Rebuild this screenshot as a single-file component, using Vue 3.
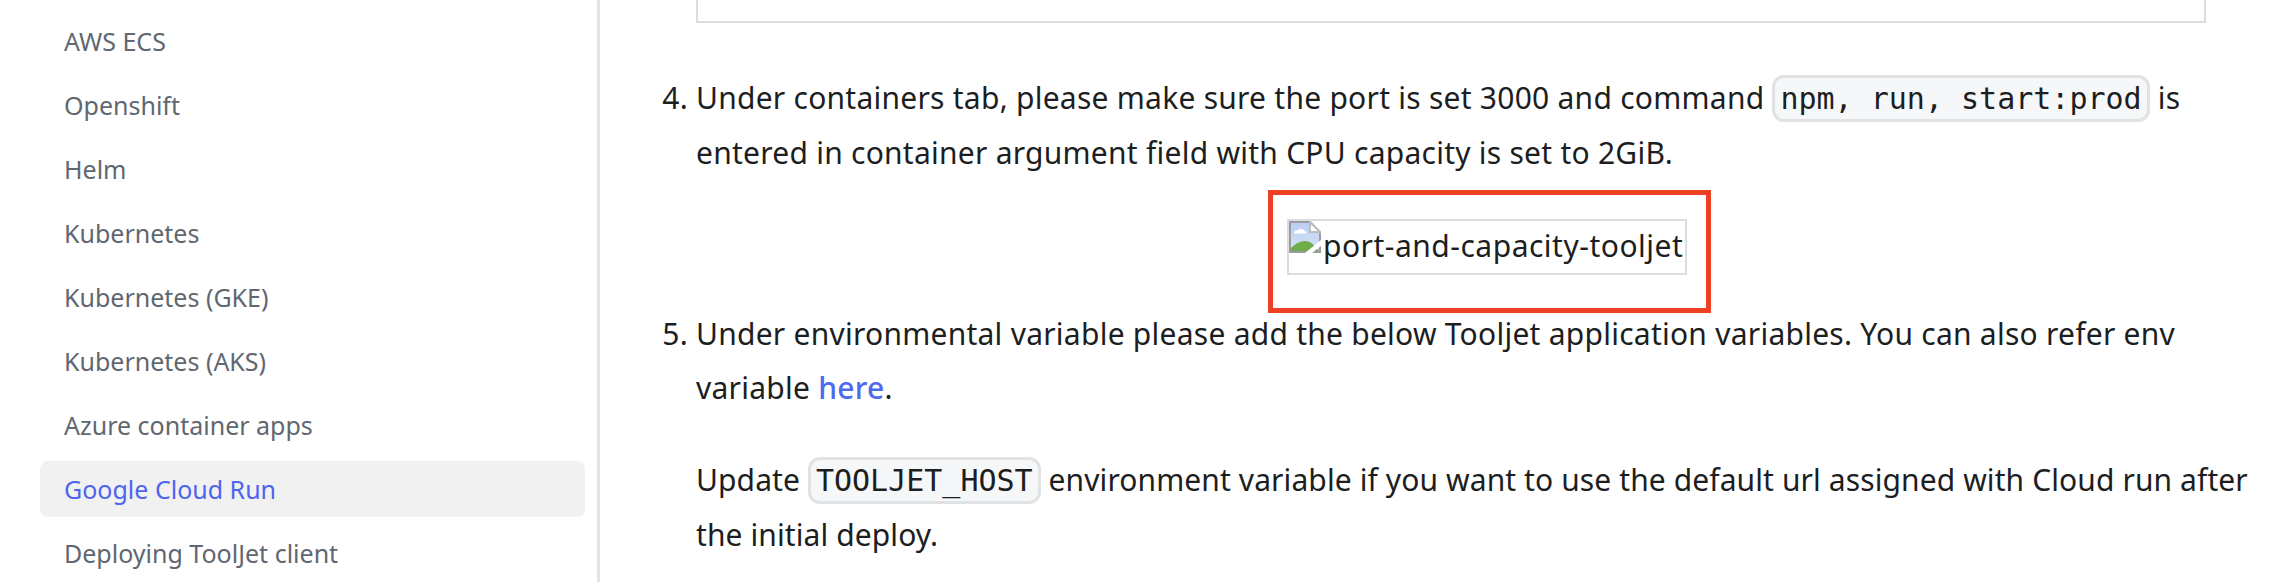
<template>
  <div class="page">
    <aside class="sidebar">
      <a
        v-for="item in menu"
        :key="item"
        class="menu-link"
        :class="{ active: item === current }"
      >{{ item }}</a>
    </aside>
    <main class="content">
      <div class="prev-image"></div>
      <ol class="steps" start="4">
        <li>
          <p>Under containers tab, please make sure the port is set 3000 and command <code>npm, run, start:prod</code> is<br>entered in container argument field with CPU capacity is set to 2GiB.</p>
          <div class="figure">
            <span class="broken-img">
              <svg class="broken-icon" width="32" height="32" viewBox="0 0 16 16">
                <defs>
                  <linearGradient id="sky" x1="0" y1="0" x2="0" y2="1">
                    <stop offset="0" stop-color="#b9cef2" />
                    <stop offset="1" stop-color="#d8e4f8" />
                  </linearGradient>
                </defs>
                <path d="M.5.5h10l5 5v10H.5z" fill="url(#sky)" stroke="#9c9c9c" />
                <path d="M10.500.5v5h5z" fill="#fff" stroke="#bdbdbd" />
                <path d="M2.500 6.200c0-1.300 1.200-1.800 2-1.500.6-1.200 2.800-1 3.200.3.700 0 1 .7.800 1.200z" fill="#fff" />
                <path d="M1 15v-1.500C3 11.500 5.500 10 8 10c3 0 5 2.500 7 5z" fill="#6fad4b" />
                <path d="M8 16l8-6.500v3L11.500 16z" fill="#fff" />
              </svg>
              <span>port-and-capacity-tooljet</span>
              <span class="highlight"></span>
            </span>
          </div>
        </li>
        <li>
          <p>Under environmental variable please add the below Tooljet application variables. You can also refer env<br>variable <a class="link">here</a>.</p>
          <p class="second">Update <code>TOOLJET_HOST</code> environment variable if you want to use the default url assigned with Cloud run after<br>the initial deploy.</p>
        </li>
      </ol>
    </main>
  </div>
</template>

<script setup>
const menu = [
  'AWS ECS',
  'Openshift',
  'Helm',
  'Kubernetes',
  'Kubernetes (GKE)',
  'Kubernetes (AKS)',
  'Azure container apps',
  'Google Cloud Run',
  'Deploying ToolJet client'
]
const current = 'Google Cloud Run'
</script>

<style>
html, body {
  margin: 0;
  background: #fff;
  overflow: hidden;
}
</style>

<style scoped>
.page {
  display: flex;
  width: 2296px;
  height: 582px;
  overflow: hidden;
  font-family: "Noto Sans", "Liberation Sans", sans-serif;
  color: #1c1e21;
}
.sidebar {
  box-sizing: border-box;
  width: 600px;
  flex: none;
  padding: 13px 12px 0 40px;
  border-right: 3px solid #e4e4e6;
  display: flex;
  flex-direction: column;
  gap: 8px;
}
.menu-link {
  display: flex;
  align-items: center;
  height: 56px;
  flex: none;
  padding-left: 24px;
  border-radius: 8px;
  font-size: 25px;
  color: #606770;
}
.menu-link.active {
  background: #f1f1f2;
  color: #4f64ee;
}
.content {
  width: 1582px;
  margin-left: 96px;
  flex: none;
}
.prev-image {
  box-sizing: border-box;
  width: 1510px;
  height: 23px;
  border: 2px solid #dadde1;
  border-top: 0;
}
.steps {
  margin: 48px 0 0;
  padding: 0;
  font-size: 30px;
  letter-spacing: 0.25px;
  line-height: 53.6px;
}
.steps li {
  margin: 0;
}
.steps p {
  margin: 0;
}
.steps .second {
  margin-top: 39px;
  letter-spacing: 0.1px;
}
code {
  padding: 3px 5px;
  background: #f6f7f8;
  border: 3px solid #e0e2e4;
  border-radius: 12px;
  font-family: "DejaVu Sans Mono", "Liberation Mono", monospace;
  font-size: 30px;
  letter-spacing: 0;
}
.link {
  color: #4f68f0;
  font-weight: 500;
}
.figure {
  display: flex;
  justify-content: center;
  margin: 40px 0 32px;
}
.broken-img {
  position: relative;
  box-sizing: border-box;
  display: flex;
  width: 400px;
  height: 56px;
  border: 2px solid #dadde1;
  white-space: nowrap;
  font-size: 30px;
  letter-spacing: 0.5px;
  line-height: 50px;
}
.broken-icon {
  flex: none;
  margin-right: 2px;
}
/* red annotation drawn over the screenshot */
.highlight {
  position: absolute;
  box-sizing: border-box;
  left: -21px;
  top: -31px;
  width: 443px;
  height: 123px;
  border: 5px solid #ee4023;
}
</style>
